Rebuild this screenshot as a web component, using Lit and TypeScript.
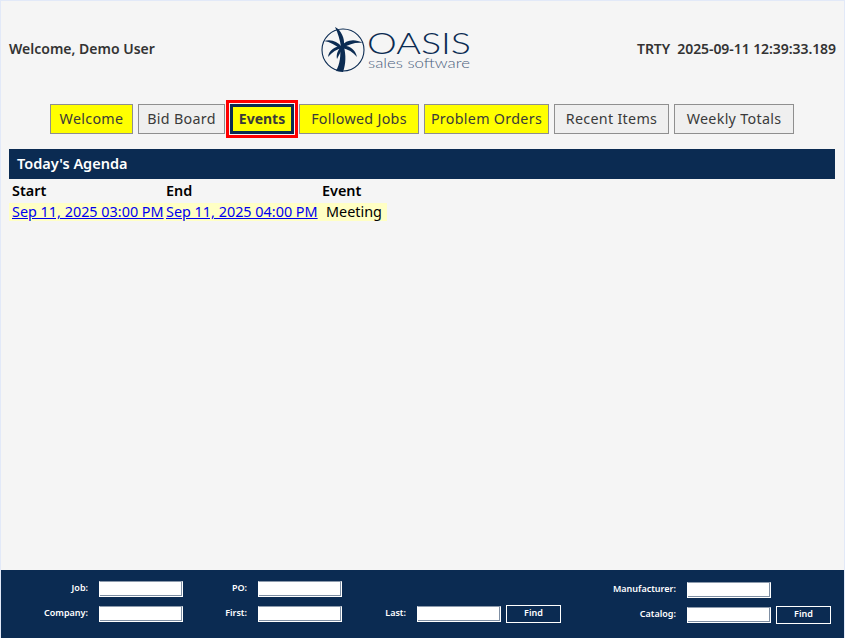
import { LitElement, html, css } from "lit";
import { customElement } from "lit/decorators.js";

const tabs = [
  { t: "Welcome", w: 83, y: true },
  { t: "Bid Board", w: 87, y: false },
  { t: "Events", w: 0, y: true, active: true },
  { t: "Followed Jobs", w: 120, y: true },
  { t: "Problem Orders", w: 125, y: true },
  { t: "Recent Items", w: 115, y: false },
  { t: "Weekly Totals", w: 120, y: false },
];

@customElement("app-root")
export class AppRoot extends LitElement {
  static styles = css`
    :host {
      display: flex;
      flex-direction: column;
      width: 845px;
      height: 638px;
      box-sizing: border-box;
      background: #f5f5f5;
      border: solid #e2e9f8;
      border-width: 1px 1px 0 1px;
      font-family: "Noto Sans", sans-serif;
      color: #333;
      overflow: hidden;
    }
    .header {
      display: flex;
      align-items: center;
      height: 94px;
      padding: 0 8px;
      font-size: 14px;
      font-weight: 600;
      flex: none;
    }
    .header .left { width: 311px; flex: none; }
    .header .right { margin-left: auto; white-space: pre; letter-spacing: -0.07px; }
    .logo { display: block; flex: none; }
    .logo .big { font: 300 29px "Lato", sans-serif; fill: #0b2b52; }
    .logo .small { font: 300 13.5px "Lato", sans-serif; fill: #4a5d7c; }
    .nav {
      display: flex;
      justify-content: center;
      align-items: center;
      gap: 5px;
      height: 38px;
      margin-top: 5px;
      margin-left: -1px;
      flex: none;
    }
    .tab {
      box-sizing: border-box;
      height: 30px;
      display: flex;
      align-items: center;
      justify-content: center;
      border: 1px solid #8f8f8f;
      background: #efefef;
      font-size: 14.3px;
      letter-spacing: 0.3px;
      color: #3a3a3a;
      padding-bottom: 2px;
    }
    .tab.yellow { background: #ffff00; }
    .ring {
      box-sizing: border-box;
      width: 72px;
      height: 38px;
      border: 3px solid #ff0000;
      padding: 1px;
      margin: 0 -4px;
      display: flex;
      background: #f5f5f5;
    }
    .ring .tab {
      flex: 1;
      height: auto;
      border: 3px solid #0b2b52;
      font-size: 14px;
      font-weight: 700;
      letter-spacing: 0;
    }
    .main { flex: 1; padding: 11px 9px 0 8px; }
    .bar {
      box-sizing: border-box;
      background: #0b2b52;
      color: #fff;
      height: 30px;
      display: flex;
      align-items: center;
      padding: 0 0 2px 8px;
      font-size: 14.5px;
      font-weight: 600;
    }
    .agenda {
      display: grid;
      grid-template-columns: 155px 156px 67px;
      justify-content: start;
      font-size: 14.4px;
      color: #000;
    }
    .agenda .h { font-weight: 600; height: 24px; line-height: 24px; }
    .agenda .c { background: #ffffc4; height: 18px; line-height: 18px; white-space: nowrap; }
    .agenda .p1 { padding-left: 3px; }
    .agenda .p2 { padding-left: 2px; }
    .agenda .p3 { padding-left: 6px; }
    .agenda a { color: #0000ee; text-decoration: underline; }
    .footer {
      flex: none;
      height: 68px;
      box-sizing: border-box;
      background: #0b2b52;
      color: #fff;
      display: flex;
      font-size: 9px;
      font-weight: 600;
    }
    .fields {
      display: grid;
      grid-template-rows: 16px 16px;
      row-gap: 9px;
      align-items: center;
    }
    .fields.a {
      grid-template-columns: 87px 95px 64px 95px 64px 95px 60px;
      padding-top: 11px;
    }
    .fields.b {
      grid-template-columns: 115px 95px 60px;
      padding-top: 12px;
    }
    .fields label { text-align: right; white-space: nowrap; padding-bottom: 3px; }
    .fields input {
      box-sizing: border-box;
      display: block;
      width: 84px;
      height: 16px;
      margin: 0 0 0 11px;
      padding: 0;
      background: #fff;
      border: 1px solid #fff;
      border-top-color: #8c9aac;
      box-shadow: inset -1px -1px 0 #7f8fa3;
      outline: none;
    }
    .fields button {
      box-sizing: border-box;
      display: block;
      width: 55px;
      height: 18px;
      margin: -1px 0 -1px 5px;
      background: #0b2b52;
      color: #fff;
      border: 1px solid #fff;
      font: 600 9px "Noto Sans", sans-serif;
      padding: 0 0 3px;
    }
  `;

  private tab(t: { t: string; w: number; y: boolean; active?: boolean }) {
    if (t.active) {
      return html`<div class="ring"><div class="tab yellow">${t.t}</div></div>`;
    }
    return html`<div class="tab ${t.y ? "yellow" : ""}" style="width:${t.w}px">${t.t}</div>`;
  }

  render() {
    return html`
      <div class="header">
        <div class="left">Welcome, Demo User</div>
        <svg class="logo" width="155" height="56" viewBox="0 0 155 56">
          <circle cx="23" cy="30" r="21" fill="none" stroke="#0b2b52" stroke-width="1.1"/>
          <path fill="#0b2b52" d="M20 27 L24 27 C26 35 26 44 23 52 L16 51 C20 44 21 35 20 27 Z"/>
          <path fill="#0b2b52" d="M21 27 C20 20 18 13 15 7 C21 10 25 18 24 26 Z"/>
          <path fill="#0b2b52" d="M21 26 C26 20 34 18 43 23 C36 22 29 24 23 28 Z"/>
          <path fill="#0b2b52" d="M22 26 C29 25 35 29 37 37 C33 32 28 29 22 28 Z"/>
          <path fill="#0b2b52" d="M22 27 C17 21 11 19 4 21 C10 22 16 25 20 29 Z"/>
          <path fill="#0b2b52" d="M22 26 C15 26 9 30 8 37 C12 32 17 29 22 28 Z"/>
          <path fill="#0b2b52" d="M21 27 C18 30 16 34 17 39 C19 35 21 31 23 28 Z"/>
          <text class="big" x="47" y="33.5" textLength="104" lengthAdjust="spacingAndGlyphs">OASIS</text>
          <text class="small" x="48" y="48" textLength="102" lengthAdjust="spacingAndGlyphs">sales software</text>
        </svg>
        <div class="right">TRTY  2025-09-11 12:39:33.189</div>
      </div>
      <div class="nav">${tabs.map((t) => this.tab(t))}</div>
      <div class="main">
        <div class="bar">Today's Agenda</div>
        <div class="agenda">
          <div class="h p1">Start</div><div class="h p2">End</div><div class="h p2">Event</div>
          <div class="c p1"><a href="#">Sep 11, 2025 03:00 PM</a></div>
          <div class="c p2"><a href="#">Sep 11, 2025 04:00 PM</a></div>
          <div class="c p3">Meeting</div>
        </div>
      </div>
      <div class="footer">
        <div class="fields a">
          <label>Job:</label><div><input /></div>
          <label>PO:</label><div><input /></div>
          <span></span><span></span><span></span>
          <label>Company:</label><div><input /></div>
          <label>First:</label><div><input /></div>
          <label>Last:</label><div><input /></div>
          <button>Find</button>
        </div>
        <div class="fields b">
          <label>Manufacturer:</label><div><input /></div><span></span>
          <label>Catalog:</label><div><input /></div><button>Find</button>
        </div>
      </div>
    `;
  }
}
